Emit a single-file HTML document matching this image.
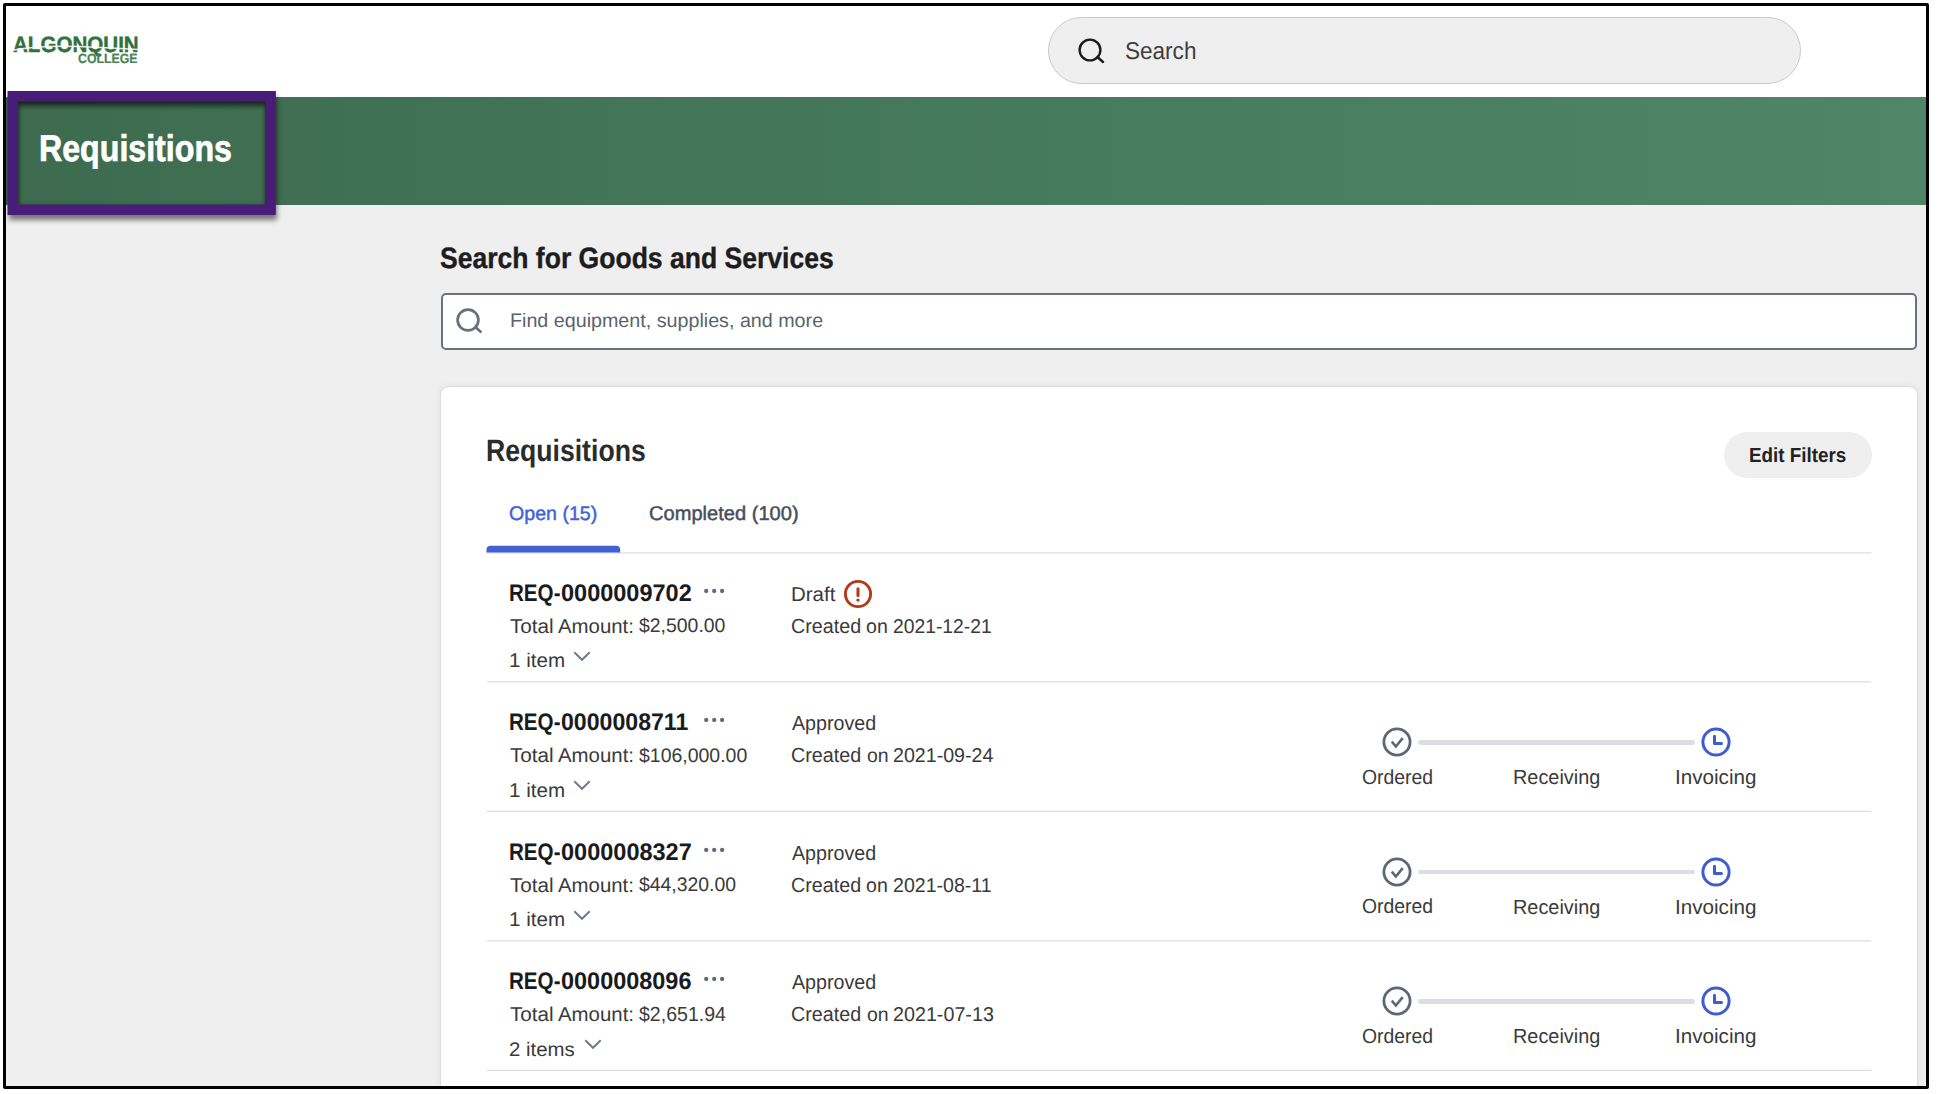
<!DOCTYPE html>
<html lang="en"><head><meta charset="utf-8"><title>Requisitions</title>
<style>
html,body{margin:0;padding:0;background:#fff;}
body{width:1938px;height:1094px;position:relative;overflow:hidden;font-family:"Liberation Sans", sans-serif;}
.t{position:absolute;white-space:nowrap;line-height:1;transform-origin:0 0;font-family:"Liberation Sans", sans-serif;text-rendering:geometricPrecision;margin:0;padding:0;}
.s{display:inline-block;position:relative;width:0;white-space:nowrap;line-height:1;transform-origin:0 0;vertical-align:baseline;}
.a{position:absolute;}
</style></head><body>
<div class="a" style="left:0;top:0;width:1926px;height:1086px;overflow:hidden;">
<div class="a" style="left:6px;top:205px;width:1920px;height:900px;background:#efefef;"></div>
<div class="a" style="left:6px;top:97px;width:1920px;height:108px;background:linear-gradient(90deg,#3e6b4f 0%,#44775a 40%,#4f8667 100%);"></div>
<div class="a" style="left:1048px;top:17px;width:753px;height:67px;box-sizing:border-box;border:1px solid #c6c9d3;border-radius:34px;background:#efefef;"></div>
<svg class="a" style="left:1069.6px;top:29.5px;" width="40" height="40" viewBox="0 0 40 40"><circle cx="20" cy="20" r="10.4" fill="none" stroke="#1c1c1c" stroke-width="2.4"/><path d="M27.4 27 L33 32" stroke="#1c1c1c" stroke-width="2.4" stroke-linecap="round" fill="none"/></svg>
<div class="a" style="left:7.5px;top:91px;width:268.4px;height:124px;box-shadow:1px 5px 5px rgba(0,0,0,.5);"></div>
<div class="a" style="left:17.5px;top:101px;width:248.4px;height:104px;box-shadow:inset 0 5px 5px rgba(0,0,0,.6), inset 0 0 4px rgba(0,0,0,.35);"></div>
<svg class="a" style="left:0;top:80px;" width="300" height="150" viewBox="0 80 300 150"><rect x="12.75" y="96.25" width="257.9" height="113.5" fill="none" stroke="#491c77" stroke-width="10.5"/></svg>
<div class="a" style="left:441px;top:293px;width:1476px;height:57px;box-sizing:border-box;border:2px solid #69727f;border-radius:5px;background:#fff;"></div>
<svg class="a" style="left:448.1px;top:300.15px;" width="40" height="40" viewBox="0 0 40 40"><circle cx="20" cy="20" r="10.4" fill="none" stroke="#67707c" stroke-width="2.7"/><path d="M27.3 27.1 L32.6 31.7" stroke="#67707c" stroke-width="2.7" stroke-linecap="round" fill="none"/></svg>
<div class="a" style="left:440px;top:386px;width:1478px;height:760px;box-sizing:border-box;border:1px solid #dbdce2;border-radius:9px;background:#fff;box-shadow:0 0 6px rgba(40,50,90,.07);"></div>
<div class="a" style="left:1724px;top:432px;width:147.5px;height:46px;border-radius:23px;background:#efefef;"></div>
<svg class="a" style="left:480px;top:540px;" width="1400" height="546" viewBox="480 540 1400 546"><path d="M486.9 552.9 H1871.3" stroke="#dcdde3" stroke-width="1.3" fill="none"/><path d="M486.9 681.8 H1871.3" stroke="#dcdde3" stroke-width="1.3" fill="none"/><path d="M486.9 811.3 H1871.3" stroke="#dcdde3" stroke-width="1.3" fill="none"/><path d="M486.9 940.8 H1871.3" stroke="#dcdde3" stroke-width="1.3" fill="none"/><path d="M486.9 1070.3 H1871.3" stroke="#dcdde3" stroke-width="1.3" fill="none"/><path d="M486.5 552.4 V549.75 a4 4 0 0 1 4 -4 H616.2 a4 4 0 0 1 4 4 V552.4 Z" fill="#4461d3"/></svg>
<svg class="a" style="left:700px;top:584.7px;" width="30" height="12" viewBox="0 0 30 12"><g fill="#626a79"><circle cx="6.2" cy="6" r="2.15"/><circle cx="14.2" cy="6" r="2.15"/><circle cx="22.1" cy="6" r="2.15"/></g></svg>
<svg class="a" style="left:569.5px;top:643.9px;" width="24" height="24" viewBox="0 0 24 24"><path d="M4.3 8.2 L12 15.8 L19.7 8.2" fill="none" stroke="#737a89" stroke-width="2" stroke-linecap="butt" stroke-linejoin="miter"/></svg>
<svg class="a" style="left:842.3px;top:578.3px;" width="32" height="32" viewBox="0 0 32 32"><circle cx="16" cy="16" r="12.6" fill="none" stroke="#b23a17" stroke-width="2.9"/><path d="M16 10.7 L16 17.6" stroke="#b23a17" stroke-width="3.1" stroke-linecap="round"/><rect x="14.4" y="20.8" width="3.2" height="2.6" rx="1" fill="#b23a17"/></svg>
<svg class="a" style="left:700px;top:714.2px;" width="30" height="12" viewBox="0 0 30 12"><g fill="#626a79"><circle cx="6.2" cy="6" r="2.15"/><circle cx="14.2" cy="6" r="2.15"/><circle cx="22.1" cy="6" r="2.15"/></g></svg>
<svg class="a" style="left:569.5px;top:773.4px;" width="24" height="24" viewBox="0 0 24 24"><path d="M4.3 8.2 L12 15.8 L19.7 8.2" fill="none" stroke="#737a89" stroke-width="2" stroke-linecap="butt" stroke-linejoin="miter"/></svg>
<div class="a" style="left:1418px;top:740.0px;width:277.2px;height:4.8px;border-radius:2.4px;background:#dcdee4;"></div>
<svg class="a" style="left:1381.4px;top:726.4px;" width="32" height="32" viewBox="0 0 32 32"><circle cx="16" cy="16" r="13.1" fill="none" stroke="#5f6776" stroke-width="2.8"/><path d="M10.8 15.7 L14.8 20.5 L21.75 12.05" fill="none" stroke="#5f6776" stroke-width="2.6" stroke-linecap="butt" stroke-linejoin="miter"/></svg>
<svg class="a" style="left:1699.9px;top:726.4px;" width="32" height="32" viewBox="0 0 32 32"><circle cx="16" cy="16" r="13.1" fill="none" stroke="#3f5bd1" stroke-width="3"/><path d="M14.5 10.2 L14.5 17.5 L21.5 17.5" fill="none" stroke="#3f5bd1" stroke-width="3" stroke-linecap="round" stroke-linejoin="round"/></svg>
<svg class="a" style="left:700px;top:843.7px;" width="30" height="12" viewBox="0 0 30 12"><g fill="#626a79"><circle cx="6.2" cy="6" r="2.15"/><circle cx="14.2" cy="6" r="2.15"/><circle cx="22.1" cy="6" r="2.15"/></g></svg>
<svg class="a" style="left:569.5px;top:902.9px;" width="24" height="24" viewBox="0 0 24 24"><path d="M4.3 8.2 L12 15.8 L19.7 8.2" fill="none" stroke="#737a89" stroke-width="2" stroke-linecap="butt" stroke-linejoin="miter"/></svg>
<div class="a" style="left:1418px;top:869.5px;width:277.2px;height:4.8px;border-radius:2.4px;background:#dcdee4;"></div>
<svg class="a" style="left:1381.4px;top:855.9px;" width="32" height="32" viewBox="0 0 32 32"><circle cx="16" cy="16" r="13.1" fill="none" stroke="#5f6776" stroke-width="2.8"/><path d="M10.8 15.7 L14.8 20.5 L21.75 12.05" fill="none" stroke="#5f6776" stroke-width="2.6" stroke-linecap="butt" stroke-linejoin="miter"/></svg>
<svg class="a" style="left:1699.9px;top:855.9px;" width="32" height="32" viewBox="0 0 32 32"><circle cx="16" cy="16" r="13.1" fill="none" stroke="#3f5bd1" stroke-width="3"/><path d="M14.5 10.2 L14.5 17.5 L21.5 17.5" fill="none" stroke="#3f5bd1" stroke-width="3" stroke-linecap="round" stroke-linejoin="round"/></svg>
<svg class="a" style="left:700px;top:973.2px;" width="30" height="12" viewBox="0 0 30 12"><g fill="#626a79"><circle cx="6.2" cy="6" r="2.15"/><circle cx="14.2" cy="6" r="2.15"/><circle cx="22.1" cy="6" r="2.15"/></g></svg>
<svg class="a" style="left:580.5px;top:1032.4px;" width="24" height="24" viewBox="0 0 24 24"><path d="M4.3 8.2 L12 15.8 L19.7 8.2" fill="none" stroke="#737a89" stroke-width="2" stroke-linecap="butt" stroke-linejoin="miter"/></svg>
<div class="a" style="left:1418px;top:999.0px;width:277.2px;height:4.8px;border-radius:2.4px;background:#dcdee4;"></div>
<svg class="a" style="left:1381.4px;top:985.4px;" width="32" height="32" viewBox="0 0 32 32"><circle cx="16" cy="16" r="13.1" fill="none" stroke="#5f6776" stroke-width="2.8"/><path d="M10.8 15.7 L14.8 20.5 L21.75 12.05" fill="none" stroke="#5f6776" stroke-width="2.6" stroke-linecap="butt" stroke-linejoin="miter"/></svg>
<svg class="a" style="left:1699.9px;top:985.4px;" width="32" height="32" viewBox="0 0 32 32"><circle cx="16" cy="16" r="13.1" fill="none" stroke="#3f5bd1" stroke-width="3"/><path d="M14.5 10.2 L14.5 17.5 L21.5 17.5" fill="none" stroke="#3f5bd1" stroke-width="3" stroke-linecap="round" stroke-linejoin="round"/></svg>
</div>
<div class="a" style="left:3px;top:3px;width:1926px;height:1086px;box-sizing:border-box;border:3px solid #000;border-radius:2px;"></div>
<div class="t" style="left:12.77px;top:33.70px;font-size:22.36px;font-weight:700;color:#33703f;transform:scaleX(0.9202);-webkit-text-stroke:0.45px #33703f;">ALGONQUIN</div>
<div class="t" style="left:78.31px;top:51.87px;font-size:13.36px;font-weight:700;color:#4a8258;transform:scaleX(0.9208);-webkit-text-stroke:0.2px #4a8258;">COLLEGE</div>
<div class="t" style="left:1124.67px;top:40.04px;font-size:24.28px;font-weight:400;color:#3e3e3e;transform:scaleX(0.9288);">Search</div>
<h1 class="t" style="left:38.90px;top:129.89px;font-size:37.13px;font-weight:700;color:#ffffff;transform:scaleX(0.8660);-webkit-text-stroke:0.7px #ffffff;">Requisitions</h1>
<h2 class="t" style="left:439.55px;top:243.74px;font-size:29.45px;font-weight:700;color:#1d1d1f;transform:scaleX(0.9013);-webkit-text-stroke:0.4px #1d1d1f;">Search for Goods and Services</h2>
<div class="t" style="left:510.19px;top:312.30px;font-size:19.50px;font-weight:400;color:#59636d;transform:scaleX(1.0099);">Find equipment, supplies, and more</div>
<h2 class="t" style="left:486.11px;top:436.08px;font-size:30.87px;font-weight:700;color:#2b2b2b;transform:scaleX(0.8624);">Requisitions</h2>
<div class="t" style="left:1748.90px;top:445.74px;font-size:20.31px;font-weight:700;color:#222222;transform:scaleX(0.9264);">Edit Filters</div>
<div class="t" style="left:509.47px;top:504.51px;font-size:19.65px;font-weight:400;color:#4162d6;transform:scaleX(0.9985);-webkit-text-stroke:0.45px #4162d6;">Open (15)</div>
<div class="t" style="left:648.51px;top:504.93px;font-size:19.88px;font-weight:400;color:#474d59;transform:scaleX(1.0116);-webkit-text-stroke:0.45px #474d59;">Completed (100)</div>
<div class="t" style="left:0;top:0;font-size:23px;font-weight:700;color:#191b20;"><span class="s" style="left:509.46px;top:581.84px;font-size:23.92px;transform:scaleX(0.8615);">REQ-</span><span class="s" style="left:561.08px;top:581.62px;font-size:24.08px;transform:scaleX(0.9761);">0000009702</span></div>
<div class="t" style="left:0;top:0;font-size:19.5px;font-weight:400;color:#3a3a3a;"><span class="s" style="left:509.59px;top:616.97px;font-size:20.03px;transform:scaleX(1.0342);">Total</span> <span class="s" style="left:552.79px;top:616.92px;font-size:20.03px;transform:scaleX(1.0190);">Amount:</span> <span class="s" style="left:628.64px;top:616.20px;font-size:19.62px;transform:scaleX(0.9901);">$2,500.00</span></div>
<div class="t" style="left:508.75px;top:652.12px;font-size:19.85px;font-weight:400;color:#3a3a3a;transform:scaleX(1.0384);">1 item</div>
<div class="t" style="left:791.34px;top:585.13px;font-size:20.10px;font-weight:400;color:#3a3a3a;transform:scaleX(1.0178);">Draft</div>
<div class="t" style="left:0;top:0;font-size:19.5px;font-weight:400;color:#3a3a3a;"><span class="s" style="left:791.21px;top:616.61px;font-size:20.36px;transform:scaleX(0.9678);">Created</span> <span class="s" style="left:860.96px;top:616.57px;font-size:19.83px;transform:scaleX(0.9866);">on</span> <span class="s" style="left:881.86px;top:616.64px;font-size:19.98px;transform:scaleX(0.9654);">2021-12-21</span></div>
<div class="t" style="left:0;top:0;font-size:23px;font-weight:700;color:#191b20;"><span class="s" style="left:509.46px;top:711.16px;font-size:23.92px;transform:scaleX(0.8615);">REQ-</span><span class="s" style="left:560.94px;top:710.68px;font-size:24.10px;transform:scaleX(0.9594);">0000008711</span></div>
<div class="t" style="left:0;top:0;font-size:19.5px;font-weight:400;color:#3a3a3a;"><span class="s" style="left:509.59px;top:745.98px;font-size:20.03px;transform:scaleX(1.0342);">Total</span> <span class="s" style="left:552.86px;top:745.87px;font-size:19.95px;transform:scaleX(1.0239);">Amount:</span> <span class="s" style="left:628.64px;top:745.75px;font-size:19.57px;transform:scaleX(0.9947);">$106,000.00</span></div>
<div class="t" style="left:508.75px;top:781.81px;font-size:19.85px;font-weight:400;color:#3a3a3a;transform:scaleX(1.0384);">1 item</div>
<div class="t" style="left:792.22px;top:714.39px;font-size:20.47px;font-weight:400;color:#3a3a3a;transform:scaleX(0.9606);">Approved</div>
<div class="t" style="left:0;top:0;font-size:19.5px;font-weight:400;color:#3a3a3a;"><span class="s" style="left:791.21px;top:746.24px;font-size:20.36px;transform:scaleX(0.9678);">Created</span> <span class="s" style="left:861.13px;top:746.40px;font-size:19.50px;transform:scaleX(0.9975);">on</span> <span class="s" style="left:881.68px;top:746.06px;font-size:19.98px;transform:scaleX(0.9824);">2021-09-24</span></div>
<div class="t" style="left:1362.15px;top:767.55px;font-size:20.36px;font-weight:400;color:#3a3a3a;transform:scaleX(0.9522);">Ordered</div>
<div class="t" style="left:1513.27px;top:768.41px;font-size:20.31px;font-weight:400;color:#3a3a3a;transform:scaleX(0.9790);">Receiving</div>
<div class="t" style="left:1675.32px;top:768.33px;font-size:20.47px;font-weight:400;color:#3a3a3a;transform:scaleX(1.0090);">Invoicing</div>
<div class="t" style="left:0;top:0;font-size:23px;font-weight:700;color:#191b20;"><span class="s" style="left:509.46px;top:840.84px;font-size:23.92px;transform:scaleX(0.8615);">REQ-</span><span class="s" style="left:561.05px;top:840.82px;font-size:24.01px;transform:scaleX(0.9797);">0000008327</span></div>
<div class="t" style="left:0;top:0;font-size:19.5px;font-weight:400;color:#3a3a3a;"><span class="s" style="left:509.59px;top:875.97px;font-size:20.03px;transform:scaleX(1.0342);">Total</span> <span class="s" style="left:552.79px;top:875.92px;font-size:20.03px;transform:scaleX(1.0190);">Amount:</span> <span class="s" style="left:628.10px;top:875.19px;font-size:19.59px;transform:scaleX(0.9900);">$44,320.00</span></div>
<div class="t" style="left:508.75px;top:911.12px;font-size:19.85px;font-weight:400;color:#3a3a3a;transform:scaleX(1.0384);">1 item</div>
<div class="t" style="left:792.22px;top:843.96px;font-size:20.47px;font-weight:400;color:#3a3a3a;transform:scaleX(0.9606);">Approved</div>
<div class="t" style="left:0;top:0;font-size:19.5px;font-weight:400;color:#3a3a3a;"><span class="s" style="left:791.21px;top:875.61px;font-size:20.36px;transform:scaleX(0.9678);">Created</span> <span class="s" style="left:860.96px;top:875.57px;font-size:19.83px;transform:scaleX(0.9866);">on</span> <span class="s" style="left:881.68px;top:875.64px;font-size:19.98px;transform:scaleX(0.9805);">2021-08-11</span></div>
<div class="t" style="left:1362.08px;top:897.23px;font-size:20.35px;font-weight:400;color:#3a3a3a;transform:scaleX(0.9518);">Ordered</div>
<div class="t" style="left:1513.27px;top:897.70px;font-size:20.31px;font-weight:400;color:#3a3a3a;transform:scaleX(0.9790);">Receiving</div>
<div class="t" style="left:1675.11px;top:897.77px;font-size:20.54px;font-weight:400;color:#3a3a3a;transform:scaleX(1.0056);">Invoicing</div>
<div class="t" style="left:0;top:0;font-size:23px;font-weight:700;color:#191b20;"><span class="s" style="left:509.46px;top:970.16px;font-size:23.92px;transform:scaleX(0.8615);">REQ-</span><span class="s" style="left:560.93px;top:969.68px;font-size:24.10px;transform:scaleX(0.9733);">0000008096</span></div>
<div class="t" style="left:0;top:0;font-size:19.5px;font-weight:400;color:#3a3a3a;"><span class="s" style="left:509.59px;top:1004.98px;font-size:20.03px;transform:scaleX(1.0342);">Total</span> <span class="s" style="left:552.86px;top:1004.87px;font-size:19.95px;transform:scaleX(1.0239);">Amount:</span> <span class="s" style="left:628.25px;top:1005.03px;font-size:20.40px;transform:scaleX(0.9586);">$2,651.94</span></div>
<div class="t" style="left:509.08px;top:1041.03px;font-size:19.71px;font-weight:400;color:#3a3a3a;transform:scaleX(1.0362);">2 items</div>
<div class="t" style="left:792.22px;top:973.39px;font-size:20.47px;font-weight:400;color:#3a3a3a;transform:scaleX(0.9606);">Approved</div>
<div class="t" style="left:0;top:0;font-size:19.5px;font-weight:400;color:#3a3a3a;"><span class="s" style="left:791.21px;top:1005.24px;font-size:20.36px;transform:scaleX(0.9678);">Created</span> <span class="s" style="left:861.13px;top:1005.40px;font-size:19.50px;transform:scaleX(0.9975);">on</span> <span class="s" style="left:881.75px;top:1004.94px;font-size:19.90px;transform:scaleX(0.9914);">2021-07-13</span></div>
<div class="t" style="left:1362.15px;top:1026.55px;font-size:20.36px;font-weight:400;color:#3a3a3a;transform:scaleX(0.9522);">Ordered</div>
<div class="t" style="left:1513.27px;top:1027.41px;font-size:20.31px;font-weight:400;color:#3a3a3a;transform:scaleX(0.9790);">Receiving</div>
<div class="t" style="left:1675.32px;top:1027.33px;font-size:20.47px;font-weight:400;color:#3a3a3a;transform:scaleX(1.0090);">Invoicing</div>
<svg class="a" style="left:8px;top:30px;" width="140" height="40" viewBox="8 30 140 40"><path d="M12 50.2 Q42 45 78 46.6 T138 49.6" fill="none" stroke="#fff" stroke-width="1.5" opacity="0.85"/></svg>
</body></html>
